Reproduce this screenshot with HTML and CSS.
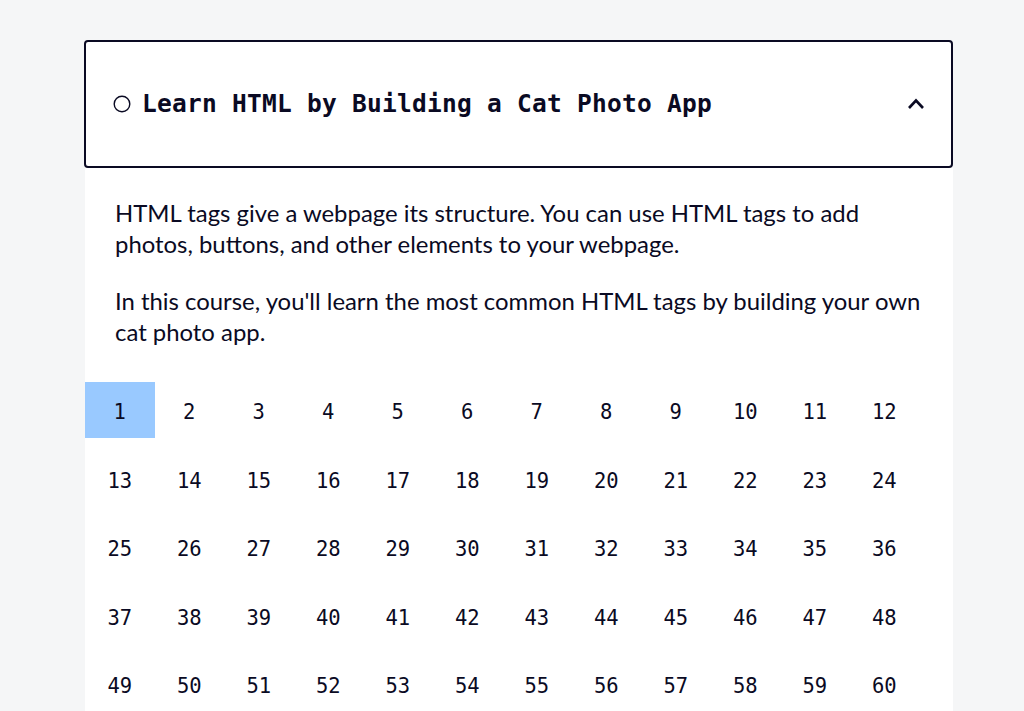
FILE: index.html
```html
<!DOCTYPE html>
<html lang="en">
<head>
<meta charset="utf-8">
<title>Learn HTML by Building a Cat Photo App</title>
<link rel="stylesheet" href="styles.css">
</head>
<body>
<main class="page">
  <section class="block">
    <button class="block-header" type="button">
      <span class="status">
        <svg width="18" height="18" viewBox="0 0 18 18" aria-hidden="true"><circle cx="9" cy="9" r="7.8" fill="#fff" stroke="#0a0a23" stroke-width="1.4"/></svg>
      </span>
      <span class="block-title">Learn HTML by Building a Cat Photo App</span>
      <span class="caret">
        <svg width="18" height="14" viewBox="0 0 18 14" aria-hidden="true"><path d="M2 12 L9 4.5 L16 12" fill="none" stroke="#0a0a23" stroke-width="2.6"/></svg>
      </span>
    </button>
    <div class="block-body">
      <div class="intro">
        <p>HTML tags give a webpage its structure. You can use HTML tags to add photos, buttons, and other elements to your webpage.</p>
        <p>In this course, you'll learn the most common HTML tags by building your own cat photo app.</p>
      </div>
      <ol class="steps">
        <li class="step current">1</li><li class="step">2</li><li class="step">3</li><li class="step">4</li><li class="step">5</li><li class="step">6</li><li class="step">7</li><li class="step">8</li><li class="step">9</li><li class="step">10</li><li class="step">11</li><li class="step">12</li>
        <li class="step">13</li><li class="step">14</li><li class="step">15</li><li class="step">16</li><li class="step">17</li><li class="step">18</li><li class="step">19</li><li class="step">20</li><li class="step">21</li><li class="step">22</li><li class="step">23</li><li class="step">24</li>
        <li class="step">25</li><li class="step">26</li><li class="step">27</li><li class="step">28</li><li class="step">29</li><li class="step">30</li><li class="step">31</li><li class="step">32</li><li class="step">33</li><li class="step">34</li><li class="step">35</li><li class="step">36</li>
        <li class="step">37</li><li class="step">38</li><li class="step">39</li><li class="step">40</li><li class="step">41</li><li class="step">42</li><li class="step">43</li><li class="step">44</li><li class="step">45</li><li class="step">46</li><li class="step">47</li><li class="step">48</li>
        <li class="step">49</li><li class="step">50</li><li class="step">51</li><li class="step">52</li><li class="step">53</li><li class="step">54</li><li class="step">55</li><li class="step">56</li><li class="step">57</li><li class="step">58</li><li class="step">59</li><li class="step">60</li>
      </ol>
    </div>
  </section>
</main>
</body>
</html>
```

FILE: styles.css
```css
html, body {
  margin: 0;
  padding: 0;
  background: #f5f6f7;
  color: #0a0a23;
}

.page {
  padding: 40px 0 0 84px;
}

.block {
  width: 869px;
}

.block-header {
  display: flex;
  align-items: center;
  width: 100%;
  height: 128px;
  box-sizing: border-box;
  margin: 0;
  padding: 0 26px 0 27px;
  background: #fff;
  border: 2px solid #0a0a23;
  border-radius: 4px;
  color: #0a0a23;
  font: inherit;
  text-align: left;
  cursor: pointer;
}

.status {
  display: flex;
  width: 18px;
  height: 18px;
  margin-right: 11px;
}

.block-title {
  flex: 1;
  font-family: "DejaVu Sans Mono", "Liberation Mono", monospace;
  font-weight: bold;
  font-size: 24.5px;
  letter-spacing: 0.25px;
  line-height: 1;
  margin-top: 1px;
}

.caret {
  display: flex;
  margin-top: -3px;
}

.block-body {
  background: #fff;
  margin-left: 1px;
  padding: 29px 0 0 0;
}

.intro {
  padding: 0 14px 0 30px;
  font-family: Lato, "Open Sans", sans-serif;
  font-size: 23.9px;
  line-height: 31px;
}

.intro p {
  margin: 0 0 26px;
}

.steps {
  list-style: none;
  margin: 0;
  padding: 9px 0 0 0;
  display: grid;
  grid-template-columns: repeat(12, 69.5px);
  grid-auto-rows: 56px;
  row-gap: 12.5px;
  font-family: "DejaVu Sans Mono", "Liberation Mono", monospace;
  font-size: 20.5px;
}

.step {
  display: flex;
  align-items: center;
  justify-content: center;
  padding-top: 4px;
  box-sizing: border-box;
}

.step.current {
  background: #99c9ff;
}
```
